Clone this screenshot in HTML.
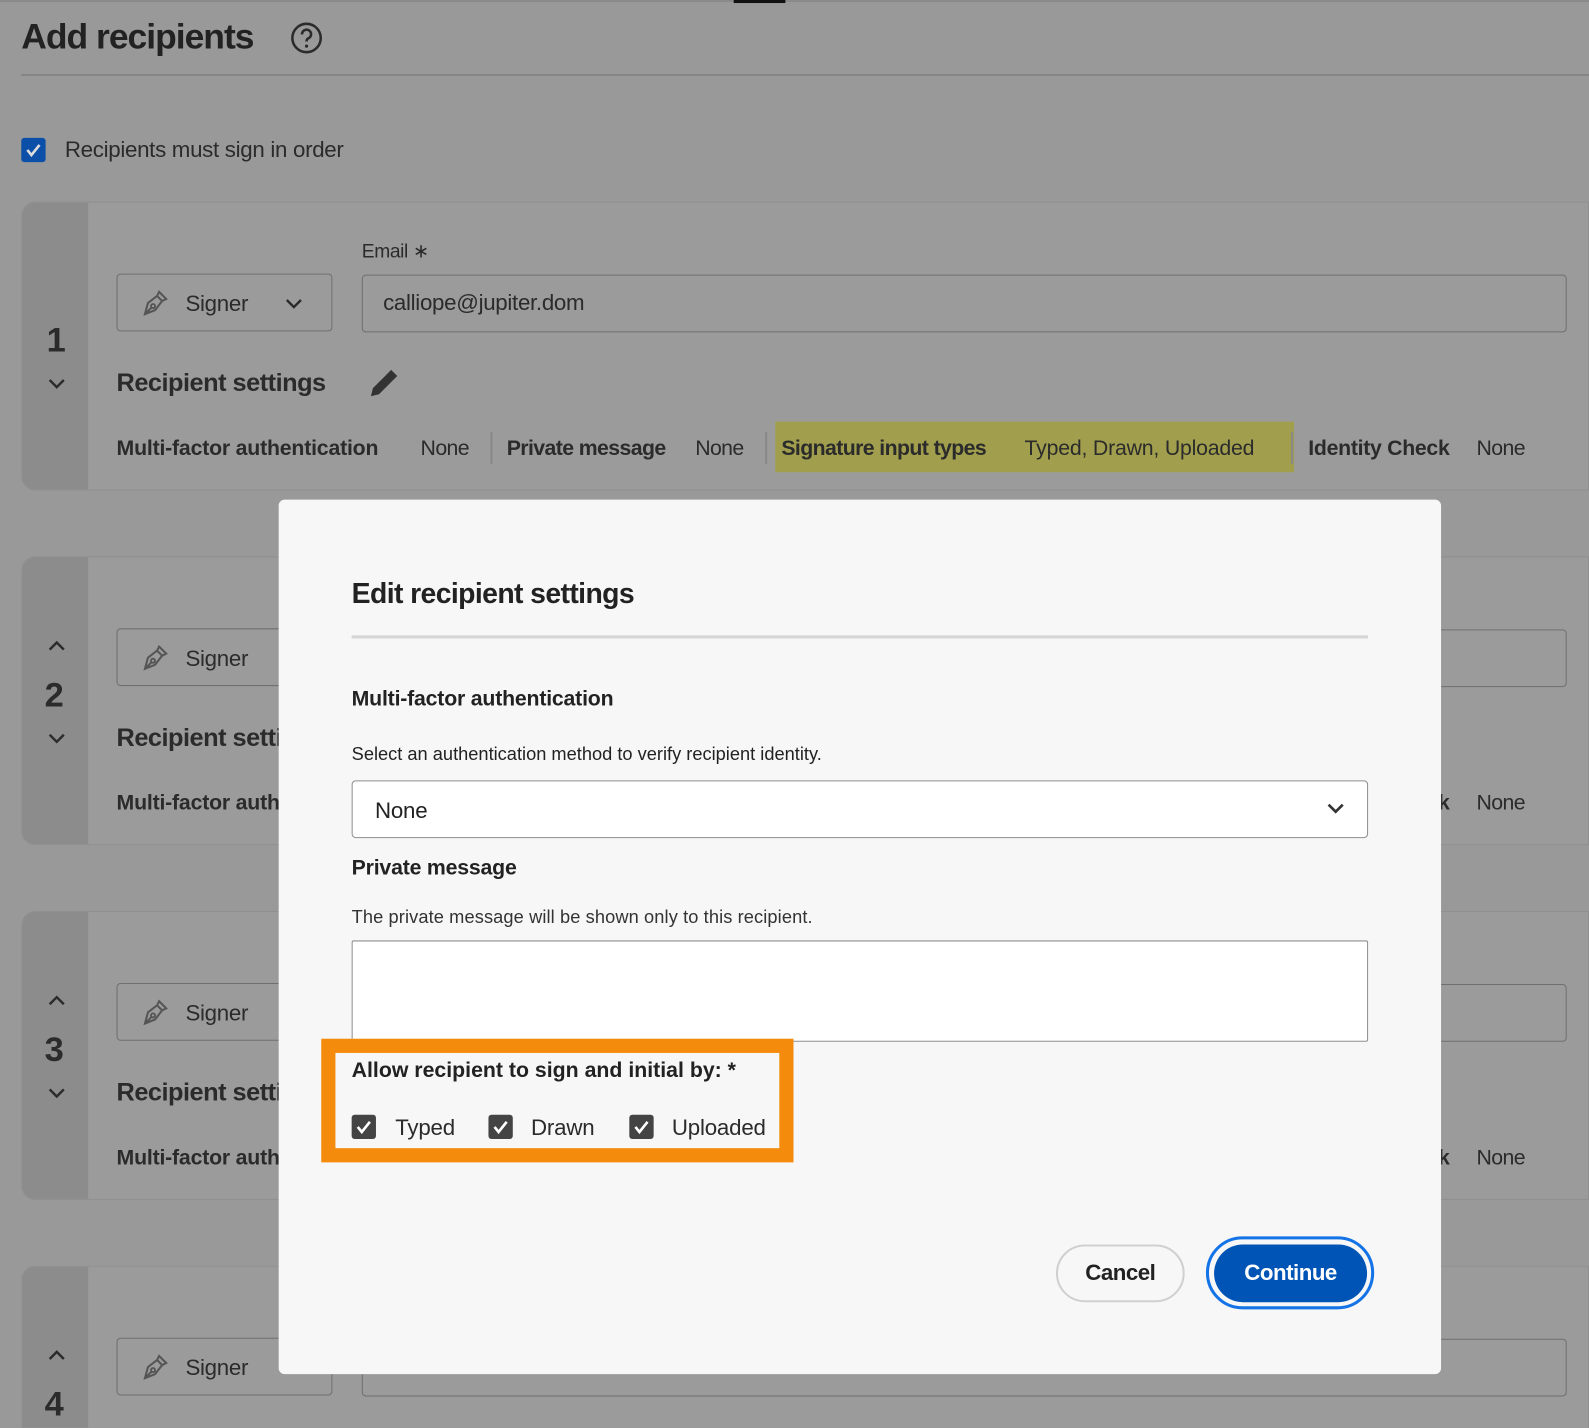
<!DOCTYPE html>
<html><head><meta charset="utf-8"><style>
*{margin:0;padding:0;box-sizing:border-box}
html,body{width:1589px;height:1428px;overflow:hidden;background:#999;font-family:"Liberation Sans",sans-serif;color:#2b2b2b}
#w{position:absolute;left:0;top:0;width:1568px;height:1409px;overflow:hidden;transform:scale(1.0134);transform-origin:0 0}
.a{position:absolute;white-space:nowrap;line-height:1}
.b{font-weight:bold}
.card{position:absolute;left:21px;width:1547px;height:285px;background:#9b9b9b;border:1px solid #8f8f8f;border-radius:14px 0 0 14px;overflow:hidden}
.strip{position:absolute;left:0;top:0;width:65px;height:100%;background:#8c8c8c}
.box{position:absolute;border:1px solid #6f6f6f;border-radius:4px}
.t22{font-size:21px;letter-spacing:-0.6px}
.sep{position:absolute;width:2px;height:32px;background:#888}
.modal{position:absolute;left:275px;top:493px;width:1147px;height:863px;background:#f7f7f7;border-radius:6px}
.cb{position:absolute;width:24px;height:24px;background:#444;border-radius:3px}
</style></head><body><div id="w">
<div style="position:absolute;left:0;top:0;width:1568px;height:2px;background:#8a8a8a"></div>
<div style="position:absolute;left:724px;top:0;width:51px;height:3px;background:#111"></div>
<div class="a b" style="left:21px;top:19px;font-size:35px;letter-spacing:-1px;color:#222">Add recipients</div>
<svg style="position:absolute;left:286px;top:21px" width="33" height="33" viewBox="0 0 33 33"><circle cx="16.5" cy="16.5" r="14" fill="none" stroke="#2b2b2b" stroke-width="2.5"/><path d="M12 13a4.5 4.5 0 1 1 6 4c-1.2.6-1.5 1.3-1.5 3" fill="none" stroke="#2b2b2b" stroke-width="2.5"/><circle cx="16.5" cy="24.5" r="1.6" fill="#2b2b2b"/></svg>
<div style="position:absolute;left:21px;top:73px;width:1547px;height:2px;background:#858585"></div>
<div style="position:absolute;left:21px;top:136px;width:24px;height:24px;background:#0b4fa8;border-radius:3px"></div>
<svg style="position:absolute;left:21px;top:136px" width="24" height="24"><path d="M6 12l4 5 8-10" fill="none" stroke="#ddd" stroke-width="2.6"/></svg>
<div class="a" style="left:64px;top:137px;font-size:22px;letter-spacing:-0.3px">Recipients must sign in order</div>

<div id="cards"></div>
<script>
var c=document.getElementById('cards'),h='';
[199,549,899,1249].forEach(function(y,i){
var n=i+1;
h+='<div class="card" style="top:'+y+'px;'+(n==4?'height:160px;border-bottom:none;border-radius:14px 0 0 0':'')+'"><div class="strip"></div></div>';
var cy=y;
if(n==1){h+='<div class="a b" style="left:46px;top:'+(cy+120)+'px;font-size:34px">1</div>';
h+='<svg style="position:absolute;left:46px;top:'+(cy+173)+'px" width="20" height="14"><path d="M3 3l7 7 7-7" fill="none" stroke="#2b2b2b" stroke-width="2.4"/></svg>';
h+='<div class="a" style="left:357px;top:'+(cy+40)+'px;font-size:19px;letter-spacing:-0.4px">Email &#x2217;</div>';}
else{h+='<svg style="position:absolute;left:46px;top:'+(cy+81)+'px" width="20" height="14"><path d="M3 11l7-7 7 7" fill="none" stroke="#2b2b2b" stroke-width="2.4"/></svg>';
h+='<div class="a b" style="left:44px;top:'+(cy+120)+'px;font-size:34px">'+n+'</div>';
if(n<4)h+='<svg style="position:absolute;left:46px;top:'+(cy+173)+'px" width="20" height="14"><path d="M3 3l7 7 7-7" fill="none" stroke="#2b2b2b" stroke-width="2.4"/></svg>';}
h+='<div class="box" style="left:115px;top:'+(cy+71)+'px;width:213px;height:57px"></div>';
h+='<svg style="position:absolute;left:137px;top:'+(cy+84)+'px" width="32" height="32" viewBox="0 0 32 32"><path d="M6 27l3-11 9-7 5 5-7 9zM6 27l7-7M18 9l2-4 7 7-4 2" fill="none" stroke="#555" stroke-width="2"/><circle cx="14" cy="19" r="2" fill="none" stroke="#555" stroke-width="1.8"/></svg>';
h+='<div class="a" style="left:183px;top:'+(cy+90)+'px;font-size:22px;letter-spacing:-0.3px">Signer</div>';
if(n==1)h+='<svg style="position:absolute;left:280px;top:'+(cy+94)+'px" width="20" height="14"><path d="M3 3l7 7 7-7" fill="none" stroke="#2b2b2b" stroke-width="2.4"/></svg>';
h+='<div class="box" style="left:357px;top:'+(cy+72)+'px;width:1189px;height:57px"></div>';
if(n==1)h+='<div class="a" style="left:378px;top:'+(cy+89)+'px;font-size:22px;letter-spacing:-0.3px">calliope@jupiter.dom</div>';
if(n==4)return;
h+='<div class="a b" style="left:115px;top:'+(cy+167)+'px;font-size:25px;letter-spacing:-0.5px">Recipient settings</div>';
if(n==1)h+='<svg style="position:absolute;left:362px;top:'+(cy+162)+'px" width="34" height="34" viewBox="0 0 34 34"><path d="M4 30l2-8L24 4l6 6-18 18z" fill="#333"/></svg>';
var ty=cy+233;
h+='<div class="a b t22" style="left:115px;top:'+ty+'px;letter-spacing:-0.2px">Multi-factor authentication</div>';
h+='<div class="a t22" style="left:415px;top:'+ty+'px">None</div>';
h+='<div class="sep" style="left:484px;top:'+(ty-6)+'px"></div>';
h+='<div class="a b t22" style="left:500px;top:'+ty+'px">Private message</div>';
h+='<div class="a t22" style="left:686px;top:'+ty+'px">None</div>';
h+='<div class="sep" style="left:755px;top:'+(ty-6)+'px"></div>';
if(n==1)h+='<div style="position:absolute;left:765px;top:'+(cy+217)+'px;width:512px;height:50px;background:#a19f4d"></div>';
h+='<div class="a b t22" style="left:771px;top:'+ty+'px">Signature input types</div>';
h+='<div class="a t22" style="left:1011px;top:'+ty+'px;letter-spacing:-0.2px">Typed, Drawn, Uploaded</div>';
h+='<div class="sep" style="left:1274px;top:'+(ty-6)+'px"></div>';
h+='<div class="a b t22" style="left:1291px;top:'+ty+'px;letter-spacing:-0.3px">Identity Check</div>';
h+='<div class="a t22" style="left:1457px;top:'+ty+'px">None</div>';
});
c.innerHTML=h;
</script>

<div class="modal"></div>
<div class="a b" style="left:347px;top:572px;font-size:28px;letter-spacing:-0.6px;color:#222">Edit recipient settings</div>
<div style="position:absolute;left:347px;top:627px;width:1003px;height:3px;background:#d5d5d5"></div>
<div class="a b t22" style="left:347px;top:679px;color:#222;letter-spacing:-0.2px">Multi-factor authentication</div>
<div class="a" style="left:347px;top:735px;font-size:18px;letter-spacing:0px;color:#222">Select an authentication method to verify recipient identity.</div>
<div style="position:absolute;left:347px;top:770px;width:1003px;height:57px;background:#fff;border:1px solid #8e8e8e;border-radius:4px"></div>
<div class="a" style="left:370px;top:789px;font-size:22px;letter-spacing:-0.2px;color:#222">None</div>
<svg style="position:absolute;left:1308px;top:791px" width="20" height="14"><path d="M3 3l7 7 7-7" fill="none" stroke="#333" stroke-width="2.6"/></svg>
<div class="a b t22" style="left:347px;top:846px;color:#222;letter-spacing:-0.2px">Private message</div>
<div class="a" style="left:347px;top:896px;font-size:18px;letter-spacing:0.1px;color:#333">The private message will be shown only to this recipient.</div>
<div style="position:absolute;left:347px;top:928px;width:1003px;height:100px;background:#fff;border:1px solid #8e8e8e;border-radius:2px"></div>
<div style="position:absolute;left:317px;top:1025px;width:466px;height:122px;border:14px solid #f58b0c;background:#f7f7f7"></div>
<div class="a b t22" style="left:347px;top:1046px;color:#222;letter-spacing:0px">Allow recipient to sign and initial by: *</div>
<div class="cb" style="left:347px;top:1100px"></div><svg style="position:absolute;left:347px;top:1100px" width="24" height="24"><path d="M6 12l4 5 8-10" fill="none" stroke="#fff" stroke-width="2.6"/></svg>
<div class="a" style="left:390px;top:1102px;font-size:22px;letter-spacing:-0.2px">Typed</div>
<div class="cb" style="left:482px;top:1100px"></div><svg style="position:absolute;left:482px;top:1100px" width="24" height="24"><path d="M6 12l4 5 8-10" fill="none" stroke="#fff" stroke-width="2.6"/></svg>
<div class="a" style="left:524px;top:1102px;font-size:22px;letter-spacing:-0.2px">Drawn</div>
<div class="cb" style="left:621px;top:1100px"></div><svg style="position:absolute;left:621px;top:1100px" width="24" height="24"><path d="M6 12l4 5 8-10" fill="none" stroke="#fff" stroke-width="2.6"/></svg>
<div class="a" style="left:663px;top:1102px;font-size:22px;letter-spacing:-0.2px">Uploaded</div>
<div style="position:absolute;left:1042px;top:1228px;width:127px;height:57px;border:2px solid #d0d0d0;border-radius:29px;background:#f7f7f7"></div>
<div class="a b" style="left:1042px;top:1245px;width:127px;text-align:center;font-size:22px;letter-spacing:-0.5px;color:#222">Cancel</div>
<div style="position:absolute;left:1190px;top:1220px;width:166px;height:72px;border:3px solid #1473e6;border-radius:36px;background:#f7f7f7"></div>
<div style="position:absolute;left:1198px;top:1228px;width:151px;height:57px;border-radius:29px;background:#0054b6"></div>
<div class="a b" style="left:1198px;top:1245px;width:151px;text-align:center;font-size:22px;letter-spacing:-0.5px;color:#fff">Continue</div>
</div></body></html>
